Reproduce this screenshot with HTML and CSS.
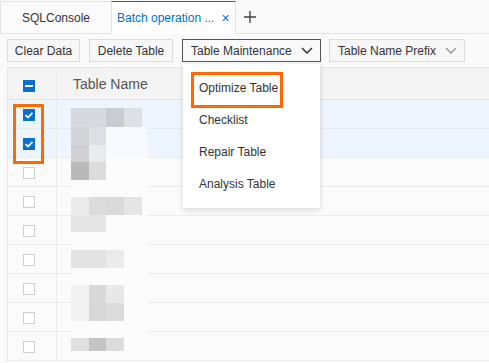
FILE: index.html
```html
<!DOCTYPE html>
<html>
<head>
<meta charset="utf-8">
<link rel="stylesheet" href="styles.css">
</head>
<body>
<div class="tabs">
  <div class="tab">SQLConsole</div>
  <div class="tab active"><span class="tab-title">Batch operation ...</span><span class="tab-close">×</span></div>
  <div class="tab-add"><svg width="12" height="12" viewBox="0 0 12 12"><path d="M6 0V12M0 6H12" stroke="#444" stroke-width="1.4" fill="none"/></svg></div>
</div>
<div class="toolbar">
  <button class="btn w-clear">Clear Data</button>
  <button class="btn w-delete">Delete Table</button>
  <div class="dd">
    <button class="btn btn-open w-maint">Table Maintenance<svg class="chev" width="12" height="7" viewBox="0 0 12 7"><polyline points="1,1 6,6 11,1" stroke="#333" stroke-width="1.5" fill="none"/></svg></button>
    <div class="menu">
      <div class="menu-item">Optimize Table</div>
      <div class="menu-item">Checklist</div>
      <div class="menu-item">Repair Table</div>
      <div class="menu-item">Analysis Table</div>
      <div class="mark mark-menu"></div>
    </div>
  </div>
  <button class="btn w-prefix">Table Name Prefix<svg class="chev" width="12" height="7" viewBox="0 0 12 7"><polyline points="1,1 6,6 11,1" stroke="#999" stroke-width="1.5" fill="none"/></svg></button>
</div>
<div class="grid">
  <div class="row head">
    <div class="c-check"><span class="cb cb-half"></span></div>
    <div class="c-name">Table Name</div>
  </div>
  <div class="row sel"><div class="c-check"><span class="cb cb-on"><svg width="12" height="12" viewBox="0 0 12 12"><polyline points="2.5,6.2 5,8.5 9.5,3.8" stroke="#fff" stroke-width="1.8" fill="none"/></svg></span></div><div class="c-name"></div></div>
  <div class="row sel"><div class="c-check"><span class="cb cb-on"><svg width="12" height="12" viewBox="0 0 12 12"><polyline points="2.5,6.2 5,8.5 9.5,3.8" stroke="#fff" stroke-width="1.8" fill="none"/></svg></span></div><div class="c-name"></div></div>
  <div class="row"><div class="c-check"><span class="cb"></span></div><div class="c-name"></div></div>
  <div class="row"><div class="c-check"><span class="cb"></span></div><div class="c-name"></div></div>
  <div class="row"><div class="c-check"><span class="cb"></span></div><div class="c-name"></div></div>
  <div class="row"><div class="c-check"><span class="cb"></span></div><div class="c-name"></div></div>
  <div class="row"><div class="c-check"><span class="cb"></span></div><div class="c-name"></div></div>
  <div class="row"><div class="c-check"><span class="cb"></span></div><div class="c-name"></div></div>
  <div class="row"><div class="c-check"><span class="cb"></span></div><div class="c-name"></div></div>
  <svg class="mosaic" width="76" height="260" viewBox="0 0 76 260">
    <rect x="0" y="27" width="76" height="231" fill="#fcfcfc"/>
    <rect x="0" y="27" width="76" height="30" fill="#f6f9fd"/>
    <rect x="0" y="8" width="18" height="19" fill="#d5d8dc"/>
    <rect x="18" y="8" width="17" height="19" fill="#d6d9dd"/>
    <rect x="35" y="8" width="18" height="19" fill="#c9ccd1"/>
    <rect x="53" y="8" width="18" height="19" fill="#dde1e6"/>
    <rect x="0" y="27" width="18" height="18" fill="#d3d6d9"/>
    <rect x="18" y="27" width="17" height="18" fill="#dcdfe3"/>
    <rect x="0" y="45" width="18" height="17" fill="#d1d1d3"/>
    <rect x="18" y="45" width="17" height="17" fill="#e9ecee"/>
    <rect x="0" y="62" width="18" height="18" fill="#b9b9b9"/>
    <rect x="18" y="62" width="17" height="18" fill="#dcdcdc"/>
    <rect x="0" y="97" width="18" height="18" fill="#ebebeb"/>
    <rect x="18" y="97" width="17" height="18" fill="#dcdcdc"/>
    <rect x="35" y="97" width="18" height="18" fill="#dadada"/>
    <rect x="53" y="97" width="18" height="18" fill="#e5e5e5"/>
    <rect x="0" y="115" width="18" height="17" fill="#e6e6e6"/>
    <rect x="18" y="115" width="17" height="17" fill="#e6e6e6"/>
    <rect x="0" y="150" width="18" height="18" fill="#e3e3e3"/>
    <rect x="18" y="150" width="17" height="18" fill="#e3e3e3"/>
    <rect x="35" y="150" width="18" height="18" fill="#ebebeb"/>
    <rect x="0" y="185" width="18" height="18" fill="#f3f3f3"/>
    <rect x="18" y="185" width="17" height="18" fill="#d9d9d9"/>
    <rect x="35" y="185" width="18" height="18" fill="#e8e8e8"/>
    <rect x="0" y="203" width="18" height="18" fill="#f3f3f3"/>
    <rect x="18" y="203" width="17" height="18" fill="#d8d8d8"/>
    <rect x="35" y="203" width="18" height="18" fill="#dcdcdc"/>
    <rect x="0" y="238" width="18" height="13" fill="#e0e0e0"/>
    <rect x="18" y="238" width="17" height="13" fill="#c4c4c4"/>
    <rect x="35" y="238" width="18" height="13" fill="#dcdcdc"/>
  </svg>
  <div class="mark mark-checks"></div>
</div>
</body>
</html>
```
FILE: styles.css
```css
* { box-sizing: border-box; }
html, body {
  margin: 0;
  padding: 0;
  width: 489px;
  height: 363px;
  overflow: hidden;
  background: #fafafa;
  font-family: "Liberation Sans", Arial, sans-serif;
  font-size: 12px;
  color: #333;
}
.tabs {
  display: flex;
  align-items: flex-end;
  height: 34px;
  border-bottom: 1px solid #e3e3e3;
}
.tab {
  height: 33px;
  margin-bottom: -1px;
  border: 1px solid #e3e3e3;
  border-bottom: 1px solid #e3e3e3;
  background: #fbfbfb;
  display: flex;
  align-items: center;
  justify-content: center;
  width: 112px;
}
.tab.active {
  width: 125px;
  margin-left: -1px;
  border-top: 1px solid #0070cc;
  border-bottom-color: #fff;
  background: #fff;
  color: #0070cc;
  justify-content: flex-start;
  padding-left: 5px;
  gap: 7px;
}
.tab-close { font-size: 14px; color: #0070cc; }
.tab-add {
  height: 33px;
  width: 28px;
  display: flex;
  align-items: center;
  justify-content: center;
  padding-top: 1px;
}
.toolbar {
  display: flex;
  gap: 9px;
  padding: 5px 0 0 7px;
  height: 33px;
}
.btn {
  height: 23px;
  padding: 0;
  margin: 0;
  font: inherit;
  color: #333;
  background: #f7f7f7;
  border: 1px solid #dcdcdc;
  display: flex;
  align-items: center;
  justify-content: center;
}
.w-clear { width: 73px; }
.w-delete { width: 84px; }
.w-maint { width: 139px; justify-content: flex-start; padding-left: 8px; gap: 9px; }
.w-prefix { width: 136px; justify-content: flex-start; padding-left: 8px; gap: 9px; margin-left: -1px; }
.btn-open { border-color: #555; background: #fafafa; }
.dd { position: relative; }
.menu {
  position: absolute;
  left: 1px;
  top: 25px;
  width: 137px;
  height: 144px;
  padding: 8px 0;
  background: #fff;
  box-shadow: 0 2px 6px rgba(0,0,0,0.14);
  z-index: 5;
}
.menu-item {
  height: 32px;
  line-height: 32px;
  padding-left: 16px;
}
.mark {
  position: absolute;
  border: 3px solid #ff6a00;
}
.mark-menu { left: 8px; top: 8px; width: 92px; height: 36px; }
.grid {
  position: relative;
  margin-left: 7px;
  width: 500px;
  border-left: 1px solid #e6e6e6;
}
.row {
  display: flex;
  height: 29px;
  border-bottom: 1px solid #ebebeb;
  background: #fbfbfb;
}
.row.head {
  height: 33px;
  border-top: 1px solid #e6e6e6;
  border-bottom: 1px solid #e3e3e3;
  background: #f4f4f4;
}
.row.sel { background: #eef5fd; border-bottom-color: #e4ebf3; }
.c-check {
  width: 49px;
  border-right: 1px solid #ebebeb;
  padding: 9px 0 0 15px;
}
.head .c-check { padding-top: 12px; }
.c-name {
  flex: 1;
  padding-left: 16px;
}
.head .c-name {
  font-size: 14px;
  color: #555;
  display: flex;
  align-items: center;
  padding-top: 1px;
}
.cb {
  display: block;
  width: 12px;
  height: 12px;
  border: 1px solid #d0d0d0;
  background: #fff;
}
.cb-on, .cb-half {
  border: none;
  background: #0a6fd1;
}
.cb-on svg { display: block; }
.cb-half { position: relative; }
.cb-half::after {
  content: "";
  position: absolute;
  left: 2px;
  top: 5px;
  width: 8px;
  height: 2px;
  background: #fff;
}
.mosaic {
  position: absolute;
  left: 63px;
  top: 33px;
}
.mark-checks { left: 5px; top: 37px; width: 31px; height: 60px; }
```
